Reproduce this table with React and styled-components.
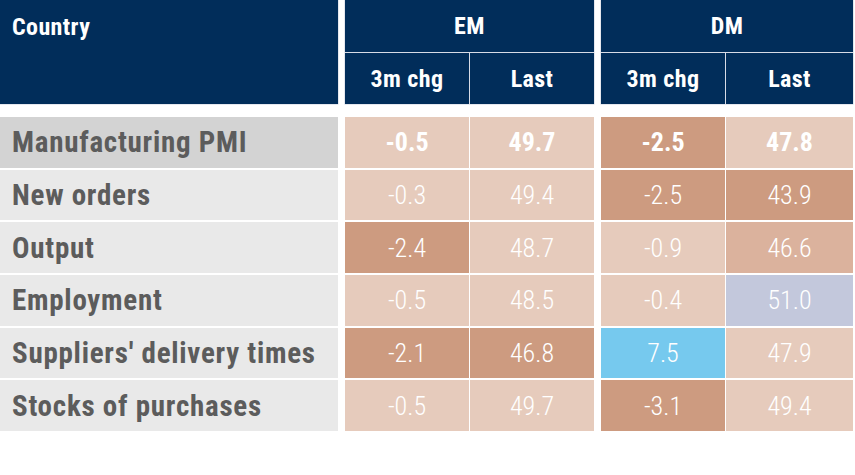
import React from "react";
import styled, { createGlobalStyle } from "styled-components";

const Global = createGlobalStyle`
  html, body { margin: 0; padding: 0; background: #ffffff; }
  body { font-family: "Roboto Condensed", "Liberation Sans Narrow", "DejaVu Sans Condensed", "Arial Narrow", Roboto, sans-serif; }
`;

const NAVY = "#012d5a";
const COLS = "338px 130px 124px 130px 127px";

const Page = styled.div`
  width: 855px;
  height: 475px;
  background: #fff;
  font-stretch: condensed;
`;

const Header = styled.div`
  display: grid;
  grid-template-columns: ${COLS};
  grid-template-rows: 52px 51px;
  column-gap: 1px;
  row-gap: 1px;
  height: 104px;
`;

const HCell = styled.div`
  background: ${NAVY};
  color: #fff;
  font-weight: 700;
  font-size: 24px;
  letter-spacing: 0.4px;
  display: flex;
  align-items: ${(p) => (p.$left ? "flex-start" : "center")};
  justify-content: ${(p) => (p.$left ? "flex-start" : "center")};
  padding: ${(p) => (p.$left ? "13px 0 0 12px" : "0")};
  grid-column: ${(p) => p.$col || "auto"};
  grid-row: ${(p) => p.$row || "auto"};
  margin-left: ${(p) => (p.$groupStart ? "6px" : "0")};
  box-shadow: 0 0 0 0.5px #c9d0de;
`;

const Body = styled.div`
  margin-top: 13px;
  display: flex;
  flex-direction: column;
  gap: 2.08px;
`;

const Row = styled.div`
  display: grid;
  grid-template-columns: ${COLS};
  column-gap: 1px;
  height: 50.6px;
`;

const Label = styled.div`
  background: ${(p) => (p.$main ? "#d3d3d3" : "#e9e9e9")};
  color: #5c5c5c;
  font-weight: 700;
  font-size: 29px;
  letter-spacing: 0.75px;
  display: flex;
  align-items: center;
  padding-left: 12px;
  white-space: nowrap;
`;

const Cell = styled.div`
  background: ${(p) => p.$bg};
  color: #fff;
  font-weight: ${(p) => (p.$bold ? 700 : 300)};
  font-size: 26px;
  display: flex;
  align-items: center;
  justify-content: center;
  margin-left: ${(p) => (p.$groupStart ? "6px" : "0")};
`;

const C = {
  L: "#e6cbbc",
  D: "#cd9b80",
  M: "#dbb29d",
  V: "#c3c8dc",
  B: "#76c9ee",
};

const rows = [
  { label: "Manufacturing PMI", main: true, vals: [["-0.5", "L"], ["49.7", "L"], ["-2.5", "D"], ["47.8", "L"]] },
  { label: "New orders", vals: [["-0.3", "L"], ["49.4", "L"], ["-2.5", "D"], ["43.9", "D"]] },
  { label: "Output", vals: [["-2.4", "D"], ["48.7", "L"], ["-0.9", "L"], ["46.6", "M"]] },
  { label: "Employment", vals: [["-0.5", "L"], ["48.5", "L"], ["-0.4", "L"], ["51.0", "V"]] },
  { label: "Suppliers' delivery times", vals: [["-2.1", "D"], ["46.8", "D"], ["7.5", "B"], ["47.9", "L"]] },
  { label: "Stocks of purchases", vals: [["-0.5", "L"], ["49.7", "L"], ["-3.1", "D"], ["49.4", "L"]] },
];

export default function App() {
  return (
    <Page>
      <Global />
      <Header>
        <HCell $left $col="1" $row="1 / span 2">Country</HCell>
        <HCell $col="2 / span 2" $row="1" $groupStart>EM</HCell>
        <HCell $col="4 / span 2" $row="1" $groupStart>DM</HCell>
        <HCell $col="2" $row="2" $groupStart>3m chg</HCell>
        <HCell $col="3" $row="2">Last</HCell>
        <HCell $col="4" $row="2" $groupStart>3m chg</HCell>
        <HCell $col="5" $row="2">Last</HCell>
      </Header>
      <Body>
        {rows.map((r) => (
          <Row key={r.label}>
            <Label $main={r.main}>{r.label}</Label>
            {r.vals.map(([v, c], i) => (
              <Cell key={i} $bg={C[c]} $bold={r.main} $groupStart={i % 2 === 0}>
                {v}
              </Cell>
            ))}
          </Row>
        ))}
      </Body>
    </Page>
  );
}
